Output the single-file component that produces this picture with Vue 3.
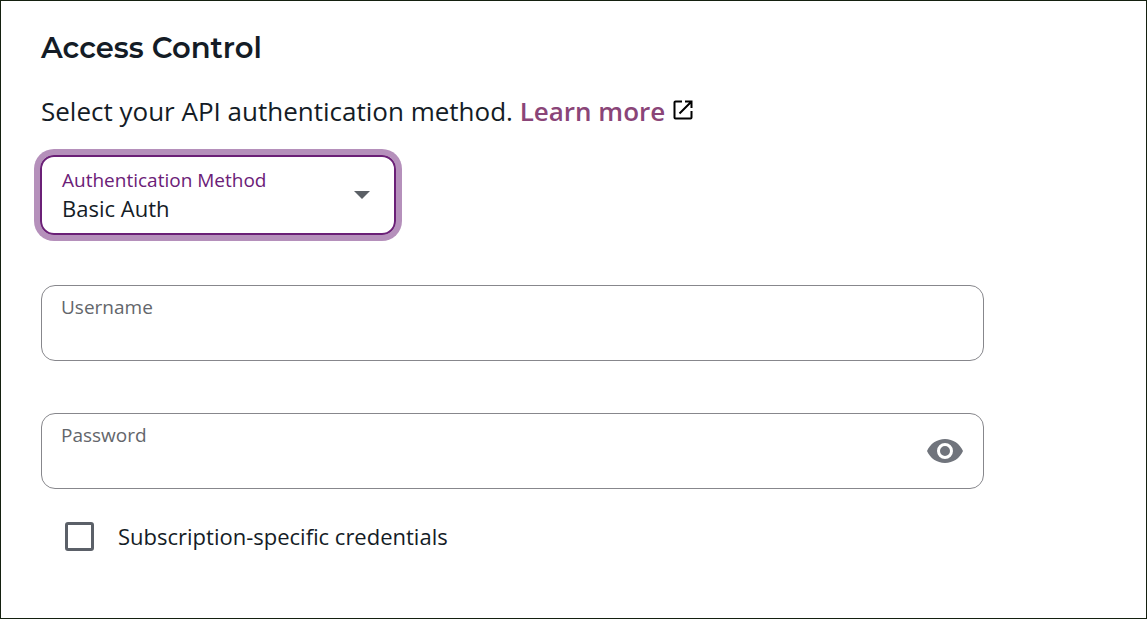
<script setup>
    import { ref } from "vue";

    const method = ref("basic");
    const username = ref("");
    const password = ref("");
    const showPassword = ref(false);
    const subscriptionSpecific = ref(false);

    //show or hide password
    const togglePassword = () => {
      showPassword.value = !showPassword.value;
    };
</script>

<template>
  <main class="access-control">
    <h1>Access Control</h1>
    <p class="intro">
      Select your API authentication method.
      <a href="#">Learn more<svg class="external" viewBox="0 0 20 20" aria-hidden="true">
        <path d="M9 1.500H2.500a1 1 0 0 0-1 1v15a1 1 0 0 0 1 1h15a1 1 0 0 0 1-1V11M12 1.500h6.500V8M18 2L6.500 13.500" />
      </svg></a>
    </p>

    <!--authentication method-->
    <div class="field select-field">
      <div class="field-text">
        <label for="method">Authentication Method</label>
        <select id="method" v-model="method">
          <option value="basic">Basic Auth</option>
          <option value="none">No Auth</option>
        </select>
      </div>
      <svg class="arrow" viewBox="0 0 16 8" aria-hidden="true">
        <path d="M0 0h16L8 8z" />
      </svg>
    </div>

    <div class="field">
      <div class="field-text">
        <label for="username">Username</label>
        <input id="username" v-model="username" type="text" />
      </div>
    </div>

    <div class="field">
      <div class="field-text">
        <label for="password">Password</label>
        <input id="password" v-model="password" :type="showPassword ? 'text' : 'password'" />
      </div>
      <button type="button" class="eye" aria-label="Show password" @click="togglePassword">
        <svg viewBox="0 0 36 24" aria-hidden="true">
          <path fill-rule="evenodd" d="M18 0C10 0 3 4.900 0 12c3 7.100 10 12 18 12s15-4.900 18-12C33 4.900 26 0 18 0zm0 20a8 8 0 1 1 0-16 8 8 0 0 1 0 16zm0-3a5 5 0 1 0 0-10 5 5 0 0 0 0 10z" />
        </svg>
      </button>
    </div>

    <!--subscription credentials-->
    <label class="check">
      <input v-model="subscriptionSpecific" type="checkbox" />
      <span>Subscription-specific credentials</span>
    </label>
  </main>
</template>

<style>
    body {
    margin: 0;
    background-color: #ffffff;
    }
</style>

<style scoped>
    .access-control {
    box-sizing: border-box;
    min-height: 100vh;
    padding: 29px 40px;
    border: 1px solid #14200f;
    color: #141c26;
    font-family: "Open Sans", "Noto Sans", sans-serif;
    }

    h1 {
    margin: 0;
    font-family: Montserrat, Inter, sans-serif;
    font-size: 29px;
    font-weight: 600;
    line-height: 36px;
    }

    .intro {
    margin: 27px 0 26px;
    font-size: 26px;
    line-height: 36px;
    }

    .intro a {
    color: #8a4578;
    font-weight: 600;
    text-decoration: none;
    }

    .external {
    width: 20px;
    height: 20px;
    margin-left: 8px;
    vertical-align: 1px;
    fill: none;
    stroke: #000000;
    stroke-width: 2;
    }

    .field {
    display: flex;
    align-items: center;
    box-sizing: border-box;
    max-width: 943px;
    min-height: 76px;
    margin-bottom: 52px;
    padding: 0 20px 0 19px;
    border: 1px solid #87878c;
    border-radius: 14px;
    }

    .select-field {
    max-width: 356px;
    min-height: 80px;
    margin: 0 -1px 50px;
    padding: 0 24px 0 20px;
    border: 2px solid #6b2077;
    box-shadow: 0 0 0 6px #b590bb;
    }

    .field-text {
    display: flex;
    flex: 1;
    flex-direction: column;
    min-width: 0;
    }

    .field label {
    color: #63666b;
    font-size: 19px;
    line-height: 26px;
    }

    .select-field label {
    color: #6b2077;
    }

    .field input,
    .field select {
    width: 100%;
    height: 32px;
    padding: 0;
    border: none;
    outline: none;
    appearance: none;
    background: none;
    color: #141c26;
    font-family: inherit;
    font-size: 22px;
    line-height: 30px;
    }

    .field select {
    height: 30px;
    }

    .arrow {
    width: 16px;
    height: 8px;
    fill: #5b6066;
    }

    .eye {
    display: flex;
    padding: 0;
    border: none;
    background: none;
    cursor: pointer;
    }

    .eye svg {
    width: 36px;
    height: 24px;
    fill: #70747c;
    }

    .check {
    display: flex;
    align-items: center;
    gap: 24px;
    width: fit-content;
    margin-top: -21px;
    padding-left: 24px;
    font-size: 22px;
    line-height: 32px;
    }

    .check input {
    box-sizing: border-box;
    width: 29px;
    height: 29px;
    margin: 0;
    border: 3px solid #5b6068;
    border-radius: 3px;
    appearance: none;
    }

    .check input:checked {
    background-color: #6b2077;
    }
</style>
